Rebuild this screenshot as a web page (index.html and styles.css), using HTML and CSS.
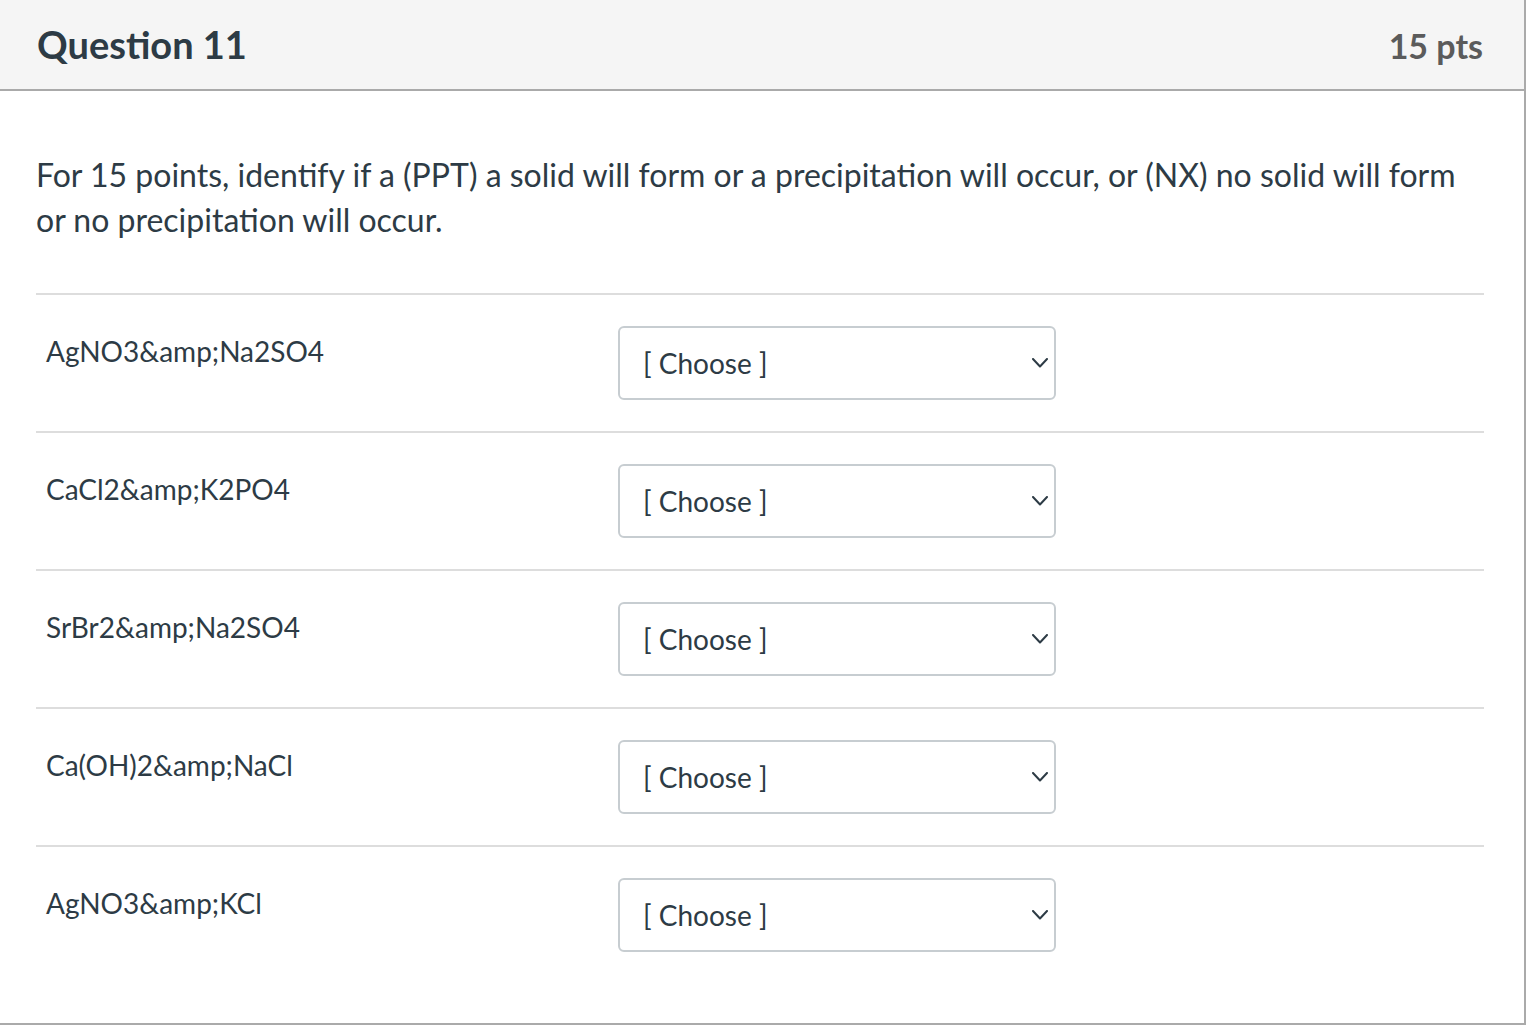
FILE: index.html
```html
<!DOCTYPE html>
<html lang="en">
<head>
<meta charset="utf-8">
<title>Question 11</title>
<link rel="stylesheet" href="styles.css">
</head>
<body>
<div class="card">
  <div class="header">
    <h2 class="title">Question 11</h2>
    <span class="pts">15 pts</span>
  </div>
  <div class="content">
    <p class="question">For 15 points, identify if a (PPT) a solid will form or a precipitation will occur, or (NX) no solid will form or no precipitation will occur.</p>
    <div class="rows">
      <div class="row">
        <div class="label">AgNO3&amp;amp;Na2SO4</div>
        <div class="select-wrap">
          <select class="select"><option>[ Choose ]</option><option>PPT</option><option>NX</option></select>
          <svg class="chev" width="16" height="10" viewBox="0 0 16 10"><polyline points="1,1 8,8.5 15,1" fill="none" stroke="#2d3b45" stroke-width="2" stroke-linecap="round" stroke-linejoin="round"/></svg>
        </div>
      </div>
      <div class="row">
        <div class="label">CaCl2&amp;amp;K2PO4</div>
        <div class="select-wrap">
          <select class="select"><option>[ Choose ]</option><option>PPT</option><option>NX</option></select>
          <svg class="chev" width="16" height="10" viewBox="0 0 16 10"><polyline points="1,1 8,8.5 15,1" fill="none" stroke="#2d3b45" stroke-width="2" stroke-linecap="round" stroke-linejoin="round"/></svg>
        </div>
      </div>
      <div class="row">
        <div class="label">SrBr2&amp;amp;Na2SO4</div>
        <div class="select-wrap">
          <select class="select"><option>[ Choose ]</option><option>PPT</option><option>NX</option></select>
          <svg class="chev" width="16" height="10" viewBox="0 0 16 10"><polyline points="1,1 8,8.5 15,1" fill="none" stroke="#2d3b45" stroke-width="2" stroke-linecap="round" stroke-linejoin="round"/></svg>
        </div>
      </div>
      <div class="row">
        <div class="label">Ca(OH)2&amp;amp;NaCl</div>
        <div class="select-wrap">
          <select class="select"><option>[ Choose ]</option><option>PPT</option><option>NX</option></select>
          <svg class="chev" width="16" height="10" viewBox="0 0 16 10"><polyline points="1,1 8,8.5 15,1" fill="none" stroke="#2d3b45" stroke-width="2" stroke-linecap="round" stroke-linejoin="round"/></svg>
        </div>
      </div>
      <div class="row">
        <div class="label">AgNO3&amp;amp;KCl</div>
        <div class="select-wrap">
          <select class="select"><option>[ Choose ]</option><option>PPT</option><option>NX</option></select>
          <svg class="chev" width="16" height="10" viewBox="0 0 16 10"><polyline points="1,1 8,8.5 15,1" fill="none" stroke="#2d3b45" stroke-width="2" stroke-linecap="round" stroke-linejoin="round"/></svg>
        </div>
      </div>
    </div>
  </div>
</div>
</body>
</html>
```
FILE: styles.css
```css
html, body {
  margin: 0;
  padding: 0;
  background: #ffffff;
}
body {
  font-family: Lato, "Open Sans", "Liberation Sans", sans-serif;
  color: #2d3b45;
}
.card {
  width: 1524px;
  border-right: 2px solid #aaaaaa;
  border-bottom: 2px solid #aaaaaa;
  background: #ffffff;
}
.header {
  box-sizing: border-box;
  height: 91px;
  background: #f5f5f5;
  border-bottom: 2px solid #aaaaaa;
  display: flex;
  justify-content: space-between;
  align-items: baseline;
  padding: 25px 41px 0 37px;
}
.title {
  margin: 0;
  font-size: 38px;
  font-weight: 700;
  color: #2d3b45;
  line-height: 38px;
}
.pts {
  font-size: 34px;
  font-weight: 700;
  color: #5b5b5b;
  line-height: 38px;
}
.content {
  padding: 61px 40px 40px 36px;
}
.question {
  margin: 0 0 51px 0;
  font-size: 32px;
  line-height: 45px;
}
.row {
  display: flex;
  align-items: flex-start;
  border-top: 2px solid #dddddd;
  padding: 31px 0 31px 10px;
}
.label {
  width: 572px;
  flex: none;
  font-size: 28px;
  line-height: 42px;
  padding-top: 4px;
}
.select-wrap {
  position: relative;
  width: 438px;
  height: 74px;
}
.select {
  appearance: none;
  -webkit-appearance: none;
  width: 438px;
  height: 74px;
  box-sizing: border-box;
  border: 2px solid #c7cdd1;
  border-radius: 6px;
  background: #ffffff;
  font-family: Lato, "Open Sans", "Liberation Sans", sans-serif;
  font-size: 28px;
  color: #2d3b45;
  padding: 0 40px 0 23px;
  margin: 0;
}
.chev {
  position: absolute;
  right: 8px;
  top: 32px;
  pointer-events: none;
}
```
